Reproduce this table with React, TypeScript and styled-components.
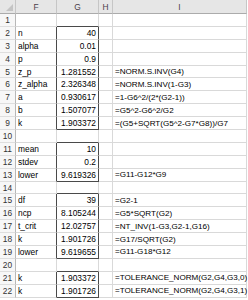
import { FC } from 'react';
import styled, { createGlobalStyle } from 'styled-components';

interface IRow {
    label?: string,
    value?: string,
    formula?: string,
    box?: 'top' | 'mid' | 'bottom',
}

const rows: IRow[] = [
    {},
    { label: 'n', value: '40', box: 'top' },
    { label: 'alpha', value: '0.01', box: 'mid' },
    { label: 'p', value: '0.9', box: 'mid' },
    { label: 'z_p', value: '1.281552', formula: '=NORM.S.INV(G4)', box: 'mid' },
    { label: 'z_alpha', value: '2.326348', formula: '=NORM.S.INV(1-G3)', box: 'mid' },
    { label: 'a', value: '0.930617', formula: '=1-G6^2/(2*(G2-1))', box: 'mid' },
    { label: 'b', value: '1.507077', formula: '=G5^2-G6^2/G2', box: 'mid' },
    { label: 'k', value: '1.903372', formula: '=(G5+SQRT(G5^2-G7*G8))/G7', box: 'bottom' },
    {},
    { label: 'mean', value: '10', box: 'top' },
    { label: 'stdev', value: '0.2', box: 'mid' },
    { label: 'lower', value: '9.619326', formula: '=G11-G12*G9', box: 'bottom' },
    {},
    { label: 'df', value: '39', formula: '=G2-1', box: 'top' },
    { label: 'ncp', value: '8.105244', formula: '=G5*SQRT(G2)', box: 'mid' },
    { label: 't_crit', value: '12.02757', formula: '=NT_INV(1-G3,G2-1,G16)', box: 'mid' },
    { label: 'k', value: '1.901726', formula: '=G17/SQRT(G2)', box: 'mid' },
    { label: 'lower', value: '9.619655', formula: '=G11-G18*G12', box: 'bottom' },
    {},
    { label: 'k', value: '1.903372', formula: '=TOLERANCE_NORM(G2,G4,G3,0)', box: 'top' },
    { label: 'k', value: '1.901726', formula: '=TOLERANCE_NORM(G2,G4,G3,1)', box: 'bottom' },
];

const GRID = '#d9d9d9';
const BOX = '#4a4a4a';

const Global = createGlobalStyle`
    body {
        margin: 0;
        background: #fff;
        font-family: "Liberation Sans", Arial, sans-serif;
    }
`

const Sheet = styled.div`
    display: grid;
    grid-template-columns: 16px 41px 42px 14px 134px 1px;
    grid-template-rows: 14px repeat(22, 12.9px);
    font-size: 8.4px;
    color: #000;
`

const Corner = styled.div`
    position: relative;
    background: #e6e6e6;
    border-right: 1px solid #c6c6c6;
    border-bottom: 1px solid #ababab;

    &::after{
        content: '';
        position: absolute;
        right: 2px;
        bottom: 2px;
        border-left: 7px solid transparent;
        border-bottom: 7px solid #c4c4c4;
    }
`

const ColHead = styled.div`
    display: flex;
    align-items: center;
    justify-content: center;
    background: #e6e6e6;
    border-right: 1px solid #c6c6c6;
    border-bottom: 1px solid #ababab;
    color: #4a3e4a;
    font-size: 8.4px;
`

const RowHead = styled.div`
    display: flex;
    align-items: center;
    justify-content: center;
    background: #f7f7f7;
    border-right: 1px solid #b8b8b8;
    border-bottom: 1px solid #dedede;
    color: #333;
    font-size: 8.4px;
`

const Cell = styled.div<{ $right?: boolean, $rb?: boolean, $bb?: boolean }>`
    display: flex;
    align-items: center;
    justify-content: ${p => p.$right ? 'flex-end' : 'flex-start'};
    padding: 0 2px;
    white-space: nowrap;
    border-right: 1px solid ${p => p.$rb ? BOX : GRID};
    border-bottom: 1px solid ${p => p.$bb ? BOX : GRID};
    box-sizing: border-box;
    min-width: 0;
`

const FormulaCell = styled(Cell)`
    font-size: 8.1px;
`

const Edge = styled.div``

const App: FC = () => {
    return (
        <>
            <Global />
            <Sheet>
                <Corner />
                <ColHead>F</ColHead>
                <ColHead>G</ColHead>
                <ColHead>H</ColHead>
                <ColHead>I</ColHead>
                <Edge />
                {rows.map((row, i) => {
                    const next = rows[i + 1]
                    const boxed = !!row.box
                    const bottomDark = row.box === 'bottom' || next?.box === 'top'
                    return [
                        <RowHead key={'r' + i}>{i + 1}</RowHead>,
                        <Cell key={'f' + i} $rb={boxed}>{row.label}</Cell>,
                        <Cell key={'g' + i} $right $rb={boxed} $bb={bottomDark}>{row.value}</Cell>,
                        <Cell key={'h' + i} />,
                        <FormulaCell key={'i' + i}>{row.formula}</FormulaCell>,
                        <Edge key={'e' + i} />,
                    ]
                })}
            </Sheet>
        </>
    )
};

export default App;
